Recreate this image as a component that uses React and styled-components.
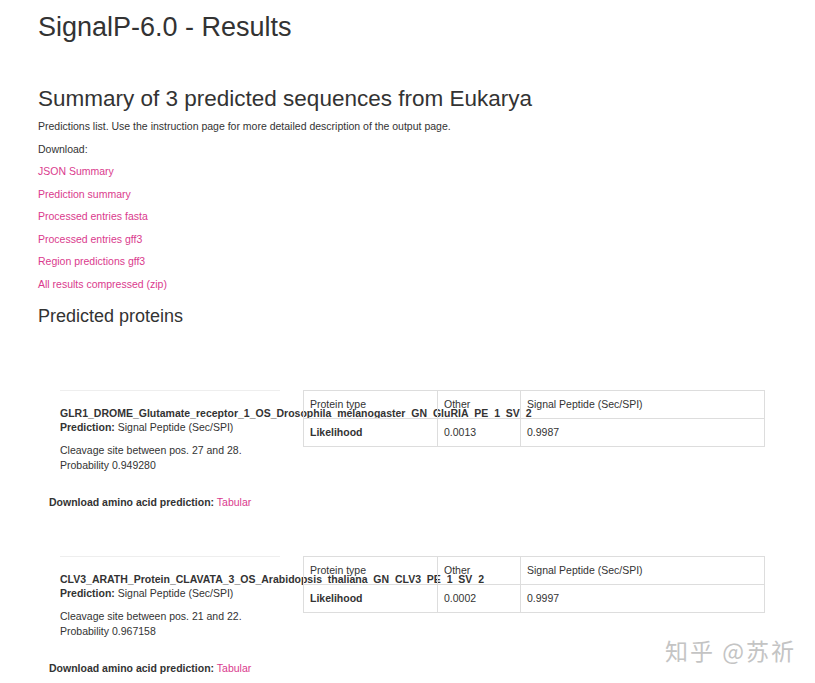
import React from 'react';
import styled, { createGlobalStyle } from 'styled-components';

const GlobalStyle = createGlobalStyle`
    html, body {
        margin: 0;
        padding: 0;
        background: #ffffff;
    }
    body {
        font-family: "Liberation Sans", Arial, sans-serif;
        font-size: 10.5px;
        line-height: 15px;
        color: #333333;
    }
`

const Page = styled.div`
    position: relative;
    padding: 13px 0 40px 38px;
    min-height: 683px;
    box-sizing: border-box;
`

const PageTitle = styled.h1`
    font-size: 27px;
    font-weight: 400;
    line-height: 1.1;
    margin: 0;
    color: #333333;
`

const Summary = styled.h2`
    font-size: 22.5px;
    font-weight: 400;
    line-height: 1.1;
    margin: 44px 0 8px 0;
    color: #333333;
`

const SectionTitle = styled.h3`
    font-size: 18px;
    font-weight: 400;
    line-height: 1.1;
    margin: 15px 0 0 0;
    color: #333333;
`

const Text = styled.p`
    margin: 0 0 7.5px 0;
`

const Link = styled.a`
    color: #da3a8d;
    text-decoration: none;
`

const Card = styled.div`
    margin-top: ${props => props.first ? '63px' : '45.5px'};
`

const CardRow = styled.div`
    display: flex;
    align-items: flex-start;
    margin-left: 22px;
`

const Info = styled.div`
    width: 220px;
    flex-shrink: 0;
    border-top: 1px solid #eeeeee;
    padding-top: 15.5px;
`

const EntryName = styled.div`
    font-weight: 700;
    font-size: 10.5px;
    line-height: 14px;
    white-space: nowrap;
`

const Label = styled.b`
    font-weight: 700;
`

const Table = styled.table`
    margin-left: 23px;
    width: 462px;
    border-collapse: collapse;
    border: 1px solid #dddddd;
    flex-shrink: 0;
`

const Cell = styled.td`
    border: 1px solid #dddddd;
    padding: 6px 6px;
    vertical-align: top;
    font-weight: ${props => props.strong ? 700 : 400};
    text-align: left;
`

const DownloadLine = styled.p`
    margin: 15px 0 0 11px;
`

const Watermark = styled.div`
    position: absolute;
    left: 665px;
    top: 635px;
    font-family: "Noto Sans CJK SC", "Noto Sans", sans-serif;
    font-size: 23px;
    line-height: 30px;
    color: #c4c4c4;
    letter-spacing: 2px;
    text-shadow: 0 0 1px #ffffff;
`

const links = [
    'JSON Summary',
    'Prediction summary',
    'Processed entries fasta',
    'Processed entries gff3',
    'Region predictions gff3',
    'All results compressed (zip)',
]

const proteins = [
    {
        name: 'GLR1_DROME_Glutamate_receptor_1_OS_Drosophila_melanogaster_GN_GluRIA_PE_1_SV_2',
        cleavage: 'Cleavage site between pos. 27 and 28.',
        probability: '0.949280',
        other: '0.0013',
        sp: '0.9987',
    },
    {
        name: 'CLV3_ARATH_Protein_CLAVATA_3_OS_Arabidopsis_thaliana_GN_CLV3_PE_1_SV_2',
        cleavage: 'Cleavage site between pos. 21 and 22.',
        probability: '0.967158',
        other: '0.0002',
        sp: '0.9997',
    },
]

const ProteinCard = ({ protein, first }) => (
    <Card first={first}>
        <CardRow>
            <Info>
                <EntryName>{protein.name}</EntryName>
                <Text><Label>Prediction:</Label> Signal Peptide (Sec/SPI)</Text>
                <Text>
                    {protein.cleavage}<br />
                    Probability {protein.probability}
                </Text>
            </Info>
            <Table>
                <colgroup>
                    <col style={{ width: 134 }} />
                    <col style={{ width: 83 }} />
                    <col />
                </colgroup>
                <tbody>
                    <tr>
                        <Cell>Protein type</Cell>
                        <Cell>Other</Cell>
                        <Cell>Signal Peptide (Sec/SPI)</Cell>
                    </tr>
                    <tr>
                        <Cell strong>Likelihood</Cell>
                        <Cell>{protein.other}</Cell>
                        <Cell>{protein.sp}</Cell>
                    </tr>
                </tbody>
            </Table>
        </CardRow>
        <DownloadLine>
            <Label>Download amino acid prediction:</Label> <Link href="#">Tabular</Link>
        </DownloadLine>
    </Card>
)

export default function App() {
    return (
        <Page>
            <GlobalStyle />
            <PageTitle>SignalP-6.0 - Results</PageTitle>
            <Summary>Summary of 3 predicted sequences from Eukarya</Summary>
            <Text>Predictions list. Use the instruction page for more detailed description of the output page.</Text>
            <Text>Download:</Text>
            {links.map(l => (
                <Text key={l}><Link href="#">{l}</Link></Text>
            ))}
            <SectionTitle>Predicted proteins</SectionTitle>
            {proteins.map((p, i) => (
                <ProteinCard key={p.name} protein={p} first={i === 0} />
            ))}
            <Watermark>知乎 @苏祈</Watermark>
        </Page>
    )
}
